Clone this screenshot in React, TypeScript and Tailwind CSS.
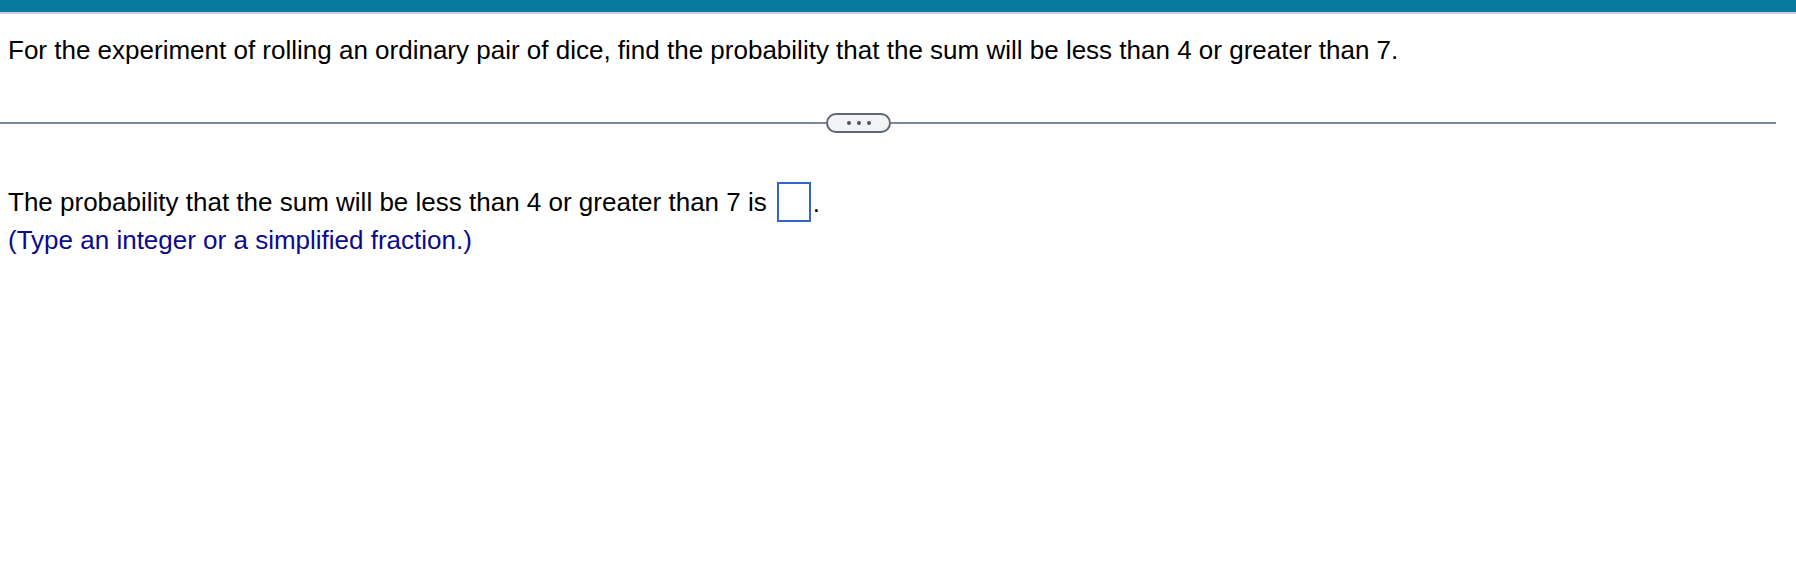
export default function App() {
  return (
    <div className="min-h-screen w-full bg-white font-['Liberation_Sans',Arial,sans-serif] text-black">
      <div className="h-3 w-full bg-[#077a9e]" />
      <div className="h-[2px] w-full bg-[#c6d0dd]" />

      <div className="px-2 pt-[21px] pb-[48px]">
        <p className="text-[26px] leading-[30px]">
          For the experiment of rolling an ordinary pair of dice, find the probability that the sum will
          be less than 4 or greater than 7.
        </p>
      </div>

      <div className="flex w-[1776px] items-center">
        <div className="h-[2px] w-[826px] bg-[#7b8794]" />
        <button className="flex h-5 w-[65px] items-center justify-center gap-[6px] rounded-full border-2 border-[#5b6775] bg-[#f3f4f6]">
          <span className="size-1 rounded-full bg-[#4b5563]" />
          <span className="size-1 rounded-full bg-[#4b5563]" />
          <span className="size-1 rounded-full bg-[#4b5563]" />
        </button>
        <div className="h-[2px] flex-1 bg-[#7b8794]" />
      </div>

      <div className="px-2 pt-[49px]">
        <div className="flex items-center text-[26px] leading-[30px]">
          <span>The probability that the sum will be less than 4 or greater than 7 is</span>
          <span className="ml-[10px] inline-block h-10 w-[34px] border-2 border-[#3366cc]" />
          <span className="ml-[2px] self-end pb-[4px]">.</span>
        </div>
        <p className="mt-[3px] text-[26px] leading-[30px] text-[#0a0a8a]">
          (Type an integer or a simplified fraction.)
        </p>
      </div>
    </div>
  );
}
